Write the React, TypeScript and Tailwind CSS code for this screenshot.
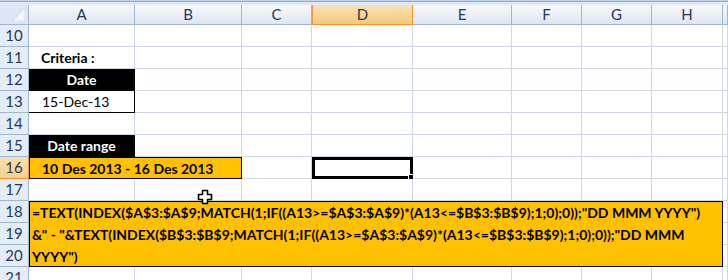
import React from 'react';

// sheet geometry: row header + columns A..H + a sliver of I
const LETTERS = ['A', 'B', 'C', 'D', 'E', 'F', 'G', 'H', ''];
const ROWS = [10, 11, 12, 13, 14, 15, 16, 17, 18, 19, 20, 21];

const FORMULA = [
  '=TEXT(INDEX($A$3:$A$9;MATCH(1;IF((A13>=$A$3:$A$9)*(A13<=$B$3:$B$9);1;0);0));"DD MMM YYYY")',
  '&" - "&TEXT(INDEX($B$3:$B$9;MATCH(1;IF((A13>=$A$3:$A$9)*(A13<=$B$3:$B$9);1;0);0));"DD MMM',
  'YYYY")',
];

const grid = 'border-r border-b border-[#d0d7e5]';

const ColHeader = ({ label, active }: { label: string; active?: boolean }) => (
  <div
    className={
      active
        ? 'flex items-center justify-center border-x border-b border-[#f29536] bg-gradient-to-b from-[#fbe3b4] to-[#f5c878] text-[15px] text-[#1f3a5c]'
        : 'flex items-center justify-center border-r border-b border-[#9eb6ce] bg-gradient-to-b from-[#f7f9fc] to-[#dfe6f0] text-[15px] text-[#1f3a5c]'
    }
  >
    {label}
  </div>
);

const RowHeader = ({ n, active }: { n: number; active?: boolean }) => (
  <div
    className={
      active
        ? 'flex items-center justify-center border-r border-b border-[#f29536] bg-gradient-to-b from-[#fbe0ad] to-[#f7d08c] text-[15px] text-[#1f3a5c]'
        : 'flex items-center justify-center border-r border-b border-[#9eb6ce] bg-[#e4ecf7] text-[15px] text-[#1f3a5c]'
    }
  >
    {n}
  </div>
);

function cellsForRow(r: number) {
  const out: React.ReactNode[] = [];
  out.push(<RowHeader key={`h${r}`} n={r} active={r === 16} />);

  if (r === 18) {
    out.push(
      <div
        key="formula"
        className="col-span-8 row-span-3 border border-black bg-[#ffc000] pl-[2px] text-[14px] font-bold leading-[22px] text-black"
      >
        {FORMULA.map((line, i) => (
          <div key={i} className="whitespace-nowrap">
            {line}
          </div>
        ))}
      </div>
    );
    out.push(<div key={`x${r}`} className={grid} />);
    return out;
  }
  if (r === 19 || r === 20) {
    out.push(<div key={`x${r}`} className={grid} />);
    return out;
  }
  if (r === 16) {
    out.push(
      <div
        key="range"
        className="col-span-2 flex items-center border border-black bg-[#ffc000] pl-[12px] text-[14px] font-bold text-black"
      >
        10 Des 2013 - 16 Des 2013
      </div>
    );
    out.push(<div key="c16" className={grid} />);
    out.push(
      <div key="d16" className="relative border-[3px] border-black">
        <div className="absolute -bottom-[4px] -right-[4px] h-[6px] w-[6px] border border-white bg-black" />
      </div>
    );
    ['E', 'F', 'G', 'H', ''].forEach((c) => out.push(<div key={`${c}${r}`} className={grid} />));
    return out;
  }

  let a: React.ReactNode = <div key={`a${r}`} className={grid} />;
  if (r === 11)
    a = (
      <div key="a11" className={`${grid} flex items-center pl-[12px] text-[14px] font-bold text-black`}>
        Criteria :
      </div>
    );
  if (r === 12)
    a = (
      <div key="a12" className="flex items-center justify-center border-r border-b border-black bg-black text-[14px] font-bold text-white">
        Date
      </div>
    );
  if (r === 13)
    a = (
      <div key="a13" className="flex items-center border-r border-b border-black pl-[13px] text-[14px] text-black">
        15-Dec-13
      </div>
    );
  if (r === 15)
    a = (
      <div key="a15" className="flex items-center justify-center border-r border-b border-black bg-black text-[14px] font-bold text-white">
        Date range
      </div>
    );
  out.push(a);
  LETTERS.slice(1).forEach((c) => out.push(<div key={`${c}${r}`} className={grid} />));
  return out;
}

export default function App() {
  return (
    <div className="relative h-[280px] w-[728px] overflow-hidden bg-white font-['Lato',sans-serif]">
      {/* strip above the column headers */}
      <div className="h-[5px] border-t border-[#c3d3e8] bg-[#dfe8f4]">
        <div className="h-[1px] bg-[#8eaad0]" />
      </div>

      <div className="grid grid-cols-[29px_106px_107px_70px_101px_99px_70px_70px_71px_5px] grid-rows-[20px_repeat(12,22px)]">
        {/* corner */}
        <div className="relative border-r border-b border-[#9eb6ce] bg-[#dce6f4]">
          <svg className="absolute right-[3px] bottom-[3px]" width="13" height="13" viewBox="0 0 13 13">
            <polygon points="13,0 13,13 0,13" fill="#f3f6fa" stroke="#b8c8dc" strokeWidth="0.5" />
          </svg>
        </div>
        {LETTERS.map((l, i) => (
          <ColHeader key={`col${i}`} label={l} active={l === 'D'} />
        ))}
        {ROWS.map((r) => cellsForRow(r))}
      </div>

      {/* excel cell cursor */}
      <svg className="absolute left-[197px] top-[189px]" width="16" height="16" viewBox="0 0 16 16">
        <path
          d="M5.5 1.5h5v4h4v5h-4v4h-5v-4h-4v-5h4z"
          fill="#fff"
          stroke="#000"
          strokeWidth="1.6"
          strokeLinejoin="round"
        />
      </svg>
    </div>
  );
}
